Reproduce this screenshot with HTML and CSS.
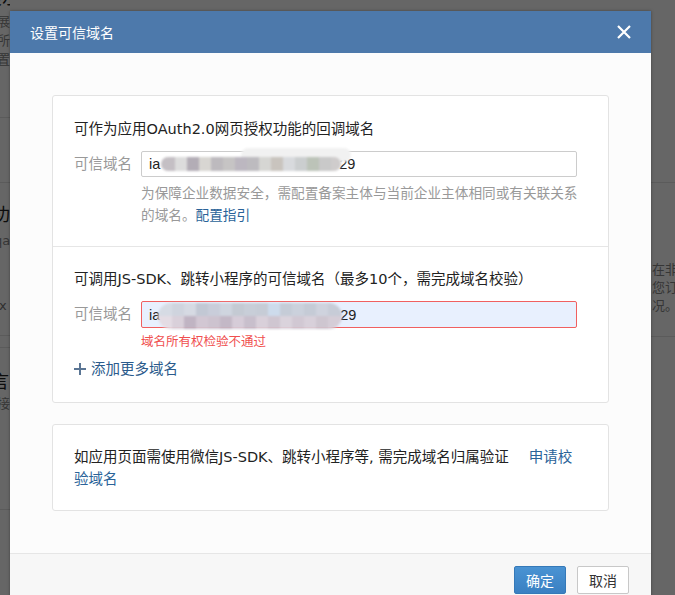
FILE: index.html
```html
<!DOCTYPE html>
<html lang="zh-CN">
<head>
<meta charset="utf-8">
<title>设置可信域名</title>
<link rel="stylesheet" href="styles.css">
</head>
<body>
<div class="page">
  <div class="bg-col bg-left">
    <div class="bg-h bg-top">自定义展示</div>
    <div class="bg-g g1">展示</div>
    <div class="bg-g">所有</div>
    <div class="bg-g">置于</div>
    <div class="bg-rule r1"></div>
    <div class="bg-rule r2"></div>
    <div class="bg-h h2">功能</div>
    <div class="bg-g q">qa</div>
    <div class="bg-g x">x</div>
    <div class="bg-rule r3"></div>
    <div class="bg-rule r4"></div>
    <div class="bg-h h3">言I</div>
    <div class="bg-g">接收</div>
    <div class="bg-rule r5"></div>
  </div>
  <div class="bg-gap"></div>
  <div class="bg-col bg-right">
    <div class="bg-rule rr1"></div>
    <div class="bg-g rg1">在非常</div>
    <div class="bg-g">您订阅</div>
    <div class="bg-g">况。</div>
    <div class="bg-rule rr2"></div>
  </div>
</div>
<div class="mask"></div>

<div class="dialog">
  <div class="dlg-head">
    <span class="dlg-title">设置可信域名</span>
    <svg class="close" width="14" height="14" viewBox="0 0 14 14"><path d="M1 1 L13 13 M13 1 L1 13" stroke="#fff" stroke-width="2.2" fill="none"/></svg>
  </div>
  <div class="dlg-body">
    <div class="card">
      <div class="sec">
        <div class="sec-title">可作为应用OAuth2.0网页授权功能的回调域名</div>
        <div class="field">
          <span class="label">可信域名</span>
          <div class="field-main">
            <div class="input"><span>ia</span><span class="mosaic m1"><span class="glow"></span><span class="row r-a"></span></span><span>29</span></div>
            <p class="help">为保障企业数据安全，需配置备案主体与当前企业主体相同或有关联关系<br>的域名。<a class="link">配置指引</a></p>
          </div>
        </div>
      </div>
      <div class="sec sec2">
        <div class="sec-title">可调用JS-SDK、跳转小程序的可信域名（最多10个，需完成域名校验）</div>
        <div class="field">
          <span class="label">可信域名</span>
          <div class="field-main">
            <div class="input error"><span>ia</span><span class="mosaic m2"><span class="row r-b"></span><span class="row r-c"></span></span><span>29</span></div>
            <p class="err">域名所有权检验不通过</p>
          </div>
        </div>
        <a class="add"><svg width="12" height="12" viewBox="0 0 12 12"><path d="M6 0 V12 M0 6 H12" stroke="#5a7594" stroke-width="2" fill="none"/></svg><span>添加更多域名</span></a>
      </div>
    </div>
    <div class="card">
      <div class="sec sec3">
        <p class="note">如应用页面需使用微信JS-SDK、跳转小程序等, 需完成域名归属验证<a class="link apply">申请校<br>验域名</a></p>
      </div>
    </div>
  </div>
  <div class="dlg-foot">
    <button class="btn primary">确定</button>
    <button class="btn">取消</button>
  </div>
</div>
</body>
</html>
```

FILE: styles.css
```css
* { box-sizing: border-box; }
html, body { margin: 0; padding: 0; }
body {
  width: 675px;
  height: 595px;
  overflow: hidden;
  background: #fff;
  font-family: "DejaVu Sans", "Noto Sans CJK SC", sans-serif;
  position: relative;
}

/* background page */
.page { display: flex; height: 595px; }
.bg-col { overflow: hidden; flex: none; }
.bg-left { width: 10px; }
.bg-gap { width: 641px; flex: none; }
.bg-right { width: 24px; }
.bg-h {
  font-size: 18px; line-height: 24px; color: #222; white-space: nowrap;
}
.bg-g {
  font-size: 13px; line-height: 19px; color: #888; white-space: nowrap;
}
.bg-left .bg-h, .bg-left .bg-g { margin-left: -3px; }
.bg-top { margin-top: -14px; margin-left: -70px !important; }
.g1 { margin-top: 2px; }
.bg-rule { height: 1px; background: #e3e3e3; }
.r1 { margin-top: 48px; }
.r2 { margin-top: 64px; }
.h2 { margin-top: 20px; margin-left: -8px !important; }
.q { margin-top: 4px; margin-left: -6px !important; }
.x { margin-top: 46px; margin-left: -1px !important; color: #777; }
.r3 { margin-top: 20px; }
.r4 { margin-top: 11px; }
.h3 { margin-top: 22px; margin-left: -9px !important; }
.r5 { margin-top: 96px; }
.rr1 { margin-top: 182px; }
.rg1 { margin-top: 78px; }
.bg-right .bg-g { margin-left: 1px; line-height: 18px; }
.rr2 { margin-top: 21px; }

.mask {
  position: absolute; inset: 0;
  background: rgba(0, 0, 0, 0.6);
}

/* dialog */
.dialog {
  position: absolute;
  left: 10px; top: 11px;
  width: 641px;
  background: #fcfcfc;
  box-shadow: 0 0 3px rgba(0,0,0,0.35);
}
.dlg-head {
  height: 42px;
  background: #4d79ab;
  display: flex;
  align-items: center;
  justify-content: space-between;
  padding: 0 20px 0 20px;
}
.dlg-title { color: #fff; font-size: 14px; line-height: 20px; font-family: "Noto Sans CJK SC", sans-serif; }
.close { display: block; }

.dlg-body { padding: 42px 42px 42px; display: flex; flex-direction: column; gap: 21px; }
.card {
  background: #fff;
  border: 1px solid #e3e3e3;
  border-radius: 3px;
}
.sec { padding: 22px 31px 20px 21px; }
.sec2 { border-top: 1px solid #e6e6e6; padding-top: 21px; padding-bottom: 22px; }
.sec3 { padding-top: 21px; padding-bottom: 20px; }
.sec-title { font-size: 14.5px; line-height: 22px; color: #222; white-space: nowrap; }

.field { display: flex; align-items: flex-start; margin-top: 11px; }
.label { width: 67px; flex: none; font-size: 14.5px; line-height: 26px; color: #999; }
.field-main { flex: 1; min-width: 0; }
.input {
  height: 26px;
  border: 1px solid #cccccc;
  border-radius: 2px;
  background: #fff;
  display: flex;
  align-items: center;
  padding-left: 7px;
  font-family: "Liberation Sans", sans-serif;
  font-size: 14.5px;
  color: #222;
}
.input.error { height: 27px; border-color: #f06060; background: #e8f0fe; }

.mosaic { position: relative; display: inline-block; flex: none; }
.mosaic.m1 { width: 180px; height: 14px; margin-left: 1px; margin-right: -2px; border-radius: 7px; filter: blur(0.8px); }
.mosaic .glow {
  position: absolute; left: 80px; top: -9px; width: 110px; height: 14px;
  border-radius: 8px; background: #f1f1f1;
}
.row { display: block; position: relative; }
.r-a {
  height: 14px; border-radius: 7px;
  background: linear-gradient(90deg,
    #c4bfc4 0 14px, #dcdcdc 14px 26px, #b3adb6 26px 38px, #d8d6d2 38px 50px,
    #bdbabe 50px 62px, #c6c4c4 62px 74px, #bcb7c0 74px 86px, #bdbbbf 86px 98px,
    #d6d6d3 98px 110px, #c9c4be 110px 122px, #d8dadd 122px 134px, #cbcecf 134px 146px,
    #bcc3b8 146px 158px, #c9c9c9 158px 170px, #cfcccc 170px 180px);
}
.mosaic.m2 {
  width: 184px; height: 26px; margin-left: -2px; margin-right: -2px; margin-top: 2px;
  border-radius: 13px; overflow: hidden; filter: blur(0.8px);
}
.r-b {
  height: 13px;
  background: linear-gradient(90deg,
    #d6dbe4 0 14px, #cfd4de 14px 26px, #d6dae3 26px 38px, #c2c8d4 38px 50px,
    #c9cdda 50px 62px, #cfd5df 62px 74px, #c4cad3 74px 86px, #c8ced8 86px 98px,
    #c6ccd6 98px 110px, #cddbec 110px 122px, #c5ccd7 122px 134px, #cbd1dc 134px 146px,
    #c5cbd6 146px 158px, #cfd3de 158px 170px, #c7ccd7 170px 184px);
}
.r-c {
  height: 13px;
  background: linear-gradient(90deg,
    #e4dce4 0 14px, #d9d0da 14px 26px, #c0b4c3 26px 38px, #d2c7d3 38px 50px,
    #cdc3cf 50px 62px, #c3b8c6 62px 74px, #d6ccd8 74px 86px, #c8bfcc 86px 98px,
    #d9d0da 98px 110px, #cfc6d1 110px 122px, #dad3dc 122px 134px, #d1c8d3 134px 146px,
    #d8d0da 146px 158px, #cec6d0 158px 170px, #d5cdd7 170px 184px);
}

.help {
  margin: 5px 0 0;
  font-size: 13.65px;
  line-height: 22px;
  color: #999;
  white-space: nowrap;
}
.link { color: #2a6399; text-decoration: none; }
.err { margin: 5px 0 0; font-size: 12.5px; line-height: 18px; color: #f04f4f; }
.add {
  display: flex; align-items: center; gap: 5px;
  margin-top: 7px;
  font-size: 14.5px; line-height: 22px; color: #2b5b8c;
}
.add svg { display: block; }

.note { margin: 0; font-size: 14.5px; line-height: 22px; color: #222; }
.apply { margin-left: 20px; }

.dlg-foot {
  border-top: 1px solid #e6e6e6;
  background: #f7f7f7;
  padding: 12px 22px 30px 0;
  display: flex;
  justify-content: flex-end;
  gap: 11px;
}
.btn {
  width: 52px; height: 28px;
  padding: 0;
  border: 1px solid #c8c8c8;
  border-radius: 2px;
  background: #fff;
  color: #333;
  font-family: "Noto Sans CJK SC", sans-serif;
  font-size: 14px;
  line-height: 26px;
}
.btn.primary {
  background: linear-gradient(#4a93d3, #3a80c2);
  border-color: #3579b8;
  color: #fff;
}
```
